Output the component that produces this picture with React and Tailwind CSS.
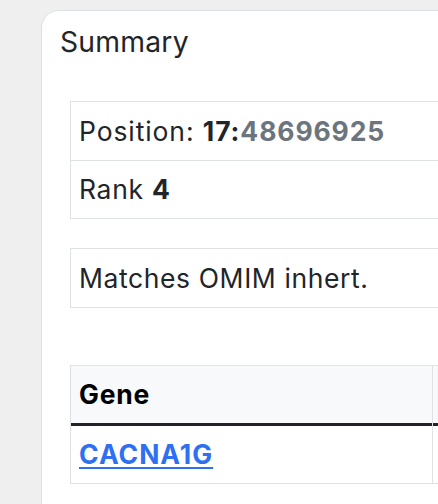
export default function App() {
  return (
    <div className="h-[504px] w-[438px] overflow-hidden bg-[#efefef] pl-[41px] pt-[10px]" style={{ fontFamily: 'Inter, "Noto Sans", sans-serif' }}>
      <div className="w-[430px] min-h-[520px] rounded-tl-[18px] border border-[#dcdfe3] bg-white text-[#212529]">
        <div className="px-[18px] pt-[13px] text-[28.3px] leading-[36px] font-normal tracking-[0.2px]">Summary</div>
        <div className="pl-[28px] pt-[41px]">
          <div className="border border-r-0 border-[#dee2e6]">
            <div className="border-b border-[#dee2e6] px-[8px] py-[11px] text-[26.5px] leading-[36px] tracking-[0.9px]">
              Position: <span className="font-bold">17:</span>
              <span className="font-bold text-[#6c757d]">48696925</span>
            </div>
            <div className="px-[8px] py-[11px] text-[26.5px] leading-[35px] tracking-[0.7px]">
              Rank <span className="font-bold">4</span>
            </div>
          </div>
          <div className="mt-[29px] border border-r-0 border-[#dee2e6] px-[8px] py-[11px] text-[26.5px] leading-[36px] tracking-[0.6px]">
            Matches OMIM inhert.
          </div>
          <div className="mt-[57px] flex border border-r-0 border-[#dee2e6]">
            <div className="w-[362px] border-r border-[#dee2e6]">
              <div className="bg-[#f8f9fa] px-[8px] py-[11px] text-[26.5px] leading-[35px] font-bold text-black tracking-[0.8px]">Gene</div>
              <div className="h-[3px] bg-[#212529]"></div>
              <div className="px-[8px] py-[11px] text-[26.5px] leading-[35px] tracking-[1px]">
                <a href="#" className="font-bold text-[#2f6ff2] underline underline-offset-[3px]">CACNA1G</a>
              </div>
            </div>
            <div className="flex-1">
              <div className="h-[57px] bg-[#f8f9fa]"></div>
              <div className="h-[3px] bg-[#212529]"></div>
            </div>
          </div>
        </div>
      </div>
    </div>
  );
}
